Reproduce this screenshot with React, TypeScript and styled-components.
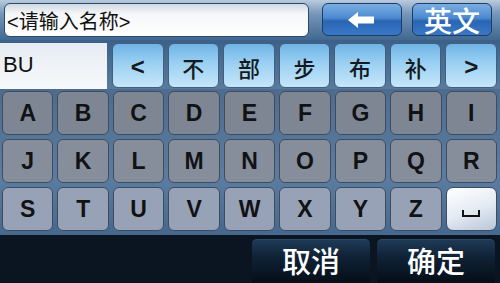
import React from 'react';
import styled, { createGlobalStyle } from 'styled-components';

const GlobalStyle = createGlobalStyle`
  html, body {
    margin: 0;
    padding: 0;
    background: #0b1522;
  }
`;

const CJK = `"Liberation Sans", "Noto Sans CJK SC", sans-serif`;

const Screen = styled.div`
  width: 500px;
  height: 283px;
  display: flex;
  flex-direction: column;
  overflow: hidden;
  font-family: ${CJK};
  background: #0b1522;
`;

const TopBar = styled.div`
  height: 42px;
  box-sizing: border-box;
  display: flex;
  align-items: flex-start;
  padding: 3px 8px 0 4px;
  background: linear-gradient(180deg, #b9cbdd 0%, #7596b9 35%, #406890 100%);
`;

const NameField = styled.div`
  width: 305px;
  height: 34px;
  box-sizing: border-box;
  border: 1px solid #2b4a6c;
  border-radius: 6px;
  background: linear-gradient(180deg, #d0d8e1 0%, #f4f6f8 30%, #ffffff 100%);
  display: flex;
  align-items: center;
  padding-left: 2px;
  font-size: 20px;
  color: #111;
`;

const BlueButton = styled.div<{ $ml: number }>`
  margin-left: ${({ $ml }) => $ml}px;
  width: 80px;
  height: 33px;
  box-sizing: border-box;
  border: 1px solid #1d3c68;
  border-radius: 6px;
  background: linear-gradient(
    180deg,
    #7aaee2 0%,
    #4c8ad0 45%,
    #2a65b4 55%,
    #3a78c6 100%
  );
  display: flex;
  align-items: center;
  justify-content: center;
  color: #fff;
  font-size: 28px;
  font-weight: 500;
  font-family: "Noto Sans CJK SC", sans-serif;
  line-height: 1;
`;

const CandidateRow = styled.div`
  height: 50px;
  box-sizing: border-box;
  display: flex;
  align-items: flex-start;
  gap: 4px;
  padding: 3px 3px 0 0;
  background: linear-gradient(180deg, #3c6088 0%, #5a7b9c 100%);
`;

const PinyinField = styled.div`
  width: 107px;
  height: 46px;
  margin-right: 1px;
  box-sizing: border-box;
  background: linear-gradient(180deg, #e6ecf2 0%, #f7f9fb 100%);
  display: flex;
  align-items: center;
  padding: 0 0 2px 3px;
  font-size: 22px;
  color: #111;
`;

const Candidate = styled.div<{ $arrow?: boolean }>`
  flex: 1;
  height: 45px;
  box-sizing: border-box;
  border: 1px solid #42607e;
  border-radius: 6px;
  background: linear-gradient(180deg, #6fb4e6 0%, #9bd0f2 45%, #c6e6fa 100%);
  display: flex;
  align-items: center;
  justify-content: center;
  padding-top: 3px;
  font-size: ${({ $arrow }) => ($arrow ? '24px' : '22px')};
  font-weight: ${({ $arrow }) => ($arrow ? 700 : 500)};
  color: #151a20;
  font-family: ${({ $arrow }) =>
    $arrow ? `"Liberation Sans", sans-serif` : `"Noto Sans CJK SC", sans-serif`};
`;

const Keyboard = styled.div`
  height: 146px;
  box-sizing: border-box;
  padding: 2px 3px 4px 2px;
  display: grid;
  grid-template-columns: repeat(9, 1fr);
  grid-template-rows: repeat(3, 44px);
  gap: 4px;
  background: linear-gradient(180deg, #4e6c8e 0%, #5b7da1 60%, #46688e 100%);
`;

const Key = styled.div<{ $shade: string }>`
  box-sizing: border-box;
  border: 1px solid #3e4c60;
  border-radius: 6px;
  background: ${({ $shade }) => $shade};
  display: flex;
  align-items: center;
  justify-content: center;
  font-family: "Liberation Sans", Arial, sans-serif;
  font-weight: 700;
  font-size: 23px;
  color: #101214;
`;

const SpaceKey = styled.div`
  box-sizing: border-box;
  border: 1px solid #3e4c60;
  border-radius: 7px;
  background: linear-gradient(160deg, #ffffff 0%, #e6ecf4 50%, #b9c6d8 100%);
  display: flex;
  align-items: center;
  justify-content: center;
`;

const SpaceMark = styled.span`
  display: block;
  width: 14px;
  height: 5px;
  margin-top: 8px;
  border: 2px solid #111;
  border-top: none;
`;

const BottomBar = styled.div`
  flex: 1;
  display: flex;
  justify-content: flex-end;
  align-items: flex-start;
  gap: 7px;
  padding: 4px 5px 0 0;
  background: #0b1522;
`;

const DarkButton = styled.div`
  width: 118px;
  height: 44px;
  box-sizing: border-box;
  border-radius: 5px 5px 0 0;
  border-top: 1px solid #2c4a66;
  background: linear-gradient(180deg, #1f3a56 0%, #0f2236 40%, #060d16 100%);
  display: flex;
  align-items: center;
  justify-content: center;
  color: #fff;
  font-size: 29px;
  font-weight: 500;
  font-family: "Noto Sans CJK SC", sans-serif;
  padding-bottom: 4px;
`;

const rows = ['ABCDEFGHI', 'JKLMNOPQR', 'STUVWXYZ'];
const shades = ['#7f8693', '#868e9c', '#98a2b6'];
const candidates = ['<', '不', '部', '步', '布', '补', '>'];

const BackArrow = () => (
  <svg width="28" height="16" viewBox="0 0 28 16">
    <polygon points="0,8 10,0 10,4.5 26,4.5 26,11.5 10,11.5 10,16" fill="#fff" />
  </svg>
);

const App = () => {
  return (
    <Screen>
      <GlobalStyle />
      <TopBar>
        <NameField>&lt;请输入名称&gt;</NameField>
        <BlueButton $ml={13}>
          <BackArrow />
        </BlueButton>
        <BlueButton $ml={10}>英文</BlueButton>
      </TopBar>
      <CandidateRow>
        <PinyinField>BU</PinyinField>
        {candidates.map((c) => (
          <Candidate key={c} $arrow={c === '<' || c === '>'}>
            {c}
          </Candidate>
        ))}
      </CandidateRow>
      <Keyboard>
        {rows.map((row, i) =>
          row.split('').map((ch) => (
            <Key key={ch} $shade={shades[i]}>
              {ch}
            </Key>
          ))
        )}
        <SpaceKey>
          <SpaceMark />
        </SpaceKey>
      </Keyboard>
      <BottomBar>
        <DarkButton>取消</DarkButton>
        <DarkButton>确定</DarkButton>
      </BottomBar>
    </Screen>
  );
};

export default App;
